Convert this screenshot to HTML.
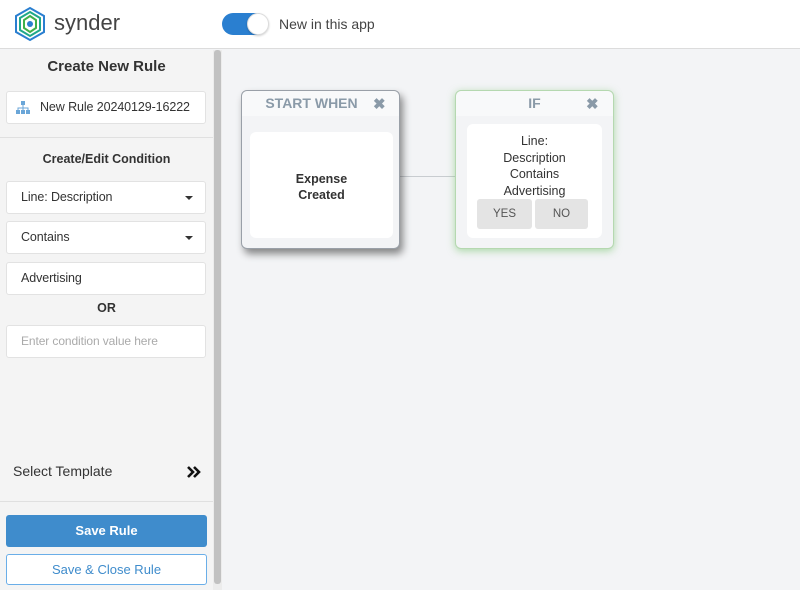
<!DOCTYPE html>
<html><head><style>
*{box-sizing:border-box;margin:0;padding:0}
body{width:800px;height:590px;overflow:hidden;font-family:"Liberation Sans",sans-serif;background:#f3f4f6;position:relative;color:#333}
.hdr{position:absolute;left:0;top:0;width:800px;height:49px;background:#fff;border-bottom:1px solid #dcdcdc}
.side{position:absolute;left:0;top:50px;width:213px;height:540px;background:#f4f4f4}
.sb{position:absolute;left:213px;top:50px;width:9px;height:540px;background:#ececec}
.sb div{position:absolute;left:1px;top:0;width:7px;height:534px;background:#c1c1c1;border-radius:3px}
.box{position:absolute;left:6px;width:200px;height:33px;background:#fff;border:1px solid #e2e2e2;border-radius:3px;font-size:12.5px;padding-left:14px;line-height:31px;color:#333;letter-spacing:-.1px}
.caret{position:absolute;right:12px;top:14px;border-left:4px solid transparent;border-right:4px solid transparent;border-top:4px solid #333}
.t{position:absolute;font-size:12.5px}
.card{position:absolute;top:90px;width:159px;height:159px;background:#f3f4f6;border-radius:6px}
.card .h{height:25px;text-align:center;font-weight:bold;color:#8a9aa8;font-size:14px;line-height:25px;background:#f8f9fa;border-radius:6px 6px 0 0}
.inner{position:absolute;background:#fff;border-radius:6px;text-align:center;font-size:12.5px;color:#333}
.x{position:absolute;top:4px;font-size:15px;color:#8a9aa8;font-weight:bold}
.yn{position:absolute;top:75px;width:55px;height:30px;background:#e4e4e4;border-radius:3px;font-size:11.5px;line-height:30px;text-align:center;color:#555}
</style></head><body>
<div class="hdr">
<svg style="position:absolute;left:13px;top:6px" width="34" height="36" viewBox="0 0 34 36">
<g fill="none" stroke-width="2">
<path d="M17 2 L31 10 L31 26 L17 34 L3 26 L3 10 Z" stroke="#2a7fd0"/>
<path d="M17 6 L27 12 L27 24 L17 30 L7 24 L7 12 Z" stroke="#1fa88a"/>
<path d="M17 10 L23 14 L23 22 L17 26 L11 22 L11 14 Z" stroke="#3fb04a"/>
</g><circle cx="17" cy="18" r="3" fill="#2a7fd0"/></svg>
<div style="position:absolute;left:54px;top:10px;font-size:22px;color:#444">synder</div>
<div style="position:absolute;left:222px;top:13px;width:46px;height:22px;border-radius:11px;background:#2a7fd0"></div>
<div style="position:absolute;left:247px;top:13px;width:22px;height:22px;border-radius:11px;background:#fff;border:1px solid #ddd;box-shadow:0 1px 2px rgba(0,0,0,.2)"></div>
<div style="position:absolute;left:279px;top:16px;font-size:14px;color:#444">New in this app</div>
</div>
<div class="side">
<div class="t" style="left:0;width:213px;text-align:center;top:8px;font-size:15px;font-weight:bold;color:#333">Create New Rule</div>
<div class="box" style="top:41px;padding-left:33px">New Rule 20240129-16222
<svg style="position:absolute;left:9px;top:9px" width="14" height="13" viewBox="0 0 14 13" fill="#6aa6d8"><rect x="5" y="0" width="4" height="4"/><rect x="0" y="9" width="4" height="4"/><rect x="5" y="9" width="4" height="4"/><rect x="10" y="9" width="4" height="4"/><path d="M6.5 4h1v2.5h5v2.5h-1v-1.5h-4v1.5h-1v-1.5h-4v1.5h-1v-2.5h5z"/></svg></div>
<div style="position:absolute;left:0;top:87px;width:213px;height:1px;background:#e0e0e0"></div>
<div class="t" style="left:0;width:213px;text-align:center;top:102px;font-weight:bold">Create/Edit Condition</div>
<div class="box" style="top:131px">Line: Description<div class="caret"></div></div>
<div class="box" style="top:171px">Contains<div class="caret"></div></div>
<div class="box" style="top:212px">Advertising</div>
<div class="t" style="left:0;width:213px;text-align:center;top:251px;font-weight:bold">OR</div>
<div class="box" style="top:275px;color:#aaa;font-size:12px">Enter condition value here</div>
<div class="t" style="left:13px;top:413px;font-size:14px">Select Template</div>
<svg style="position:absolute;left:187px;top:416px" width="14" height="12" viewBox="0 0 14 12"><path d="M1 1l5 5-5 5M7 1l5 5-5 5" fill="none" stroke="#111" stroke-width="2.6"/></svg>
<div style="position:absolute;left:0;top:451px;width:213px;height:1px;background:#e0e0e0"></div>
<div style="position:absolute;left:6px;top:465px;width:201px;height:32px;background:#3f8ccc;border-radius:3px;color:#fff;font-weight:bold;font-size:13px;text-align:center;line-height:32px">Save Rule</div>
<div style="position:absolute;left:6px;top:504px;width:201px;height:31px;background:#fff;border:1px solid #6aaee8;border-radius:3px;color:#3f8ccc;font-size:13px;text-align:center;line-height:29px">Save &amp; Close Rule</div>
</div>
<div class="sb"><div></div></div>
<div style="position:absolute;left:400px;top:176px;width:55px;height:1px;background:#c8ccd0"></div>
<div class="card" style="left:241px;border:1px solid #9aa0a8;box-shadow:3px 5px 8px rgba(0,0,0,.45)">
<div class="h" style="padding-right:18px">START WHEN</div><div class="x" style="left:131px">✖</div>
<div class="inner" style="left:8px;top:41px;width:143px;height:106px;padding-top:39px;line-height:16px;font-weight:bold">Expense<br>Created</div>
</div>
<div class="card" style="left:455px;border:1px solid #b5d8b0;box-shadow:0 2px 8px rgba(100,190,90,.5)">
<div class="h">IF</div><div class="x" style="left:130px">✖</div>
<div class="inner" style="left:11px;top:33px;width:135px;height:114px;padding-top:9px;line-height:16.5px">Line:<br>Description<br>Contains<br>Advertising
<div class="yn" style="left:10px">YES</div><div class="yn" style="left:68px;width:53px">NO</div></div>
</div>
</body></html>
